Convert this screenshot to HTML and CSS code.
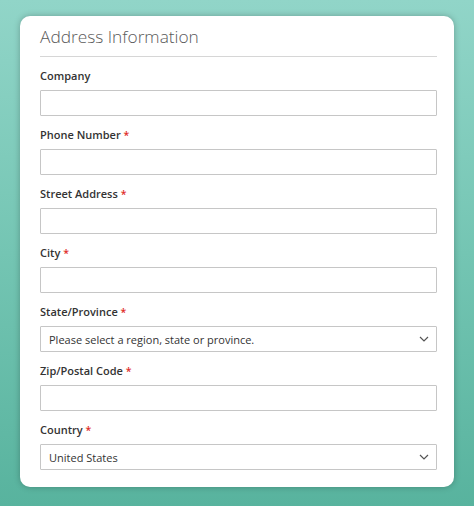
FILE: index.html
```html
<!DOCTYPE html>
<html>
<head>
<meta charset="utf-8">
<link rel="stylesheet" href="styles.css">
</head>
<body>
<div class="card">
  <div class="legend">Address Information</div>
  <div class="fields">
    <div class="field">
      <label class="label">Company</label>
      <input class="control" type="text">
    </div>
    <div class="field">
      <label class="label">Phone Number <span class="req">*</span></label>
      <input class="control" type="text">
    </div>
    <div class="field">
      <label class="label">Street Address <span class="req">*</span></label>
      <input class="control" type="text">
    </div>
    <div class="field">
      <label class="label">City <span class="req">*</span></label>
      <input class="control" type="text">
    </div>
    <div class="field">
      <label class="label">State/Province <span class="req">*</span></label>
      <div class="select-wrap">
        <select class="control select"><option>Please select a region, state or province.</option></select>
        <svg class="chev" width="10" height="6" viewBox="0 0 10 6"><path d="M1 1 L5 5 L9 1" fill="none" stroke="#555" stroke-width="1.2"/></svg>
      </div>
    </div>
    <div class="field">
      <label class="label">Zip/Postal Code <span class="req">*</span></label>
      <input class="control" type="text">
    </div>
    <div class="field">
      <label class="label">Country <span class="req">*</span></label>
      <div class="select-wrap">
        <select class="control select"><option>United States</option></select>
        <svg class="chev" width="10" height="6" viewBox="0 0 10 6"><path d="M1 1 L5 5 L9 1" fill="none" stroke="#555" stroke-width="1.2"/></svg>
      </div>
    </div>
  </div>
</div>
</body>
</html>
```
FILE: styles.css
```css
html, body {
  margin: 0;
  padding: 0;
}
body {
  width: 474px;
  height: 506px;
  overflow: hidden;
  background: linear-gradient(180deg, #91d5c8 0%, #74c5b3 50%, #58b39e 100%);
  font-family: "Open Sans", "Liberation Sans", sans-serif;
  display: flex;
  align-items: flex-start;
}
.card {
  margin: 16px 0 0 20px;
  width: 434px;
  height: 471px;
  box-sizing: border-box;
  background: #fff;
  border-radius: 10px;
  box-shadow: 0 0 6px rgba(0, 0, 0, 0.25);
  padding: 9px 17px 0 20px;
  display: flex;
  flex-direction: column;
}
.legend {
  font-size: 17.3px;
  font-weight: 300;
  color: #5a5a5a;
  line-height: 24px;
  padding-bottom: 7px;
  border-bottom: 1px solid #d6d6d6;
}
.fields {
  display: flex;
  flex-direction: column;
  gap: 11px;
  padding-top: 11px;
}
.field {
  display: flex;
  flex-direction: column;
  gap: 7px;
}
.label {
  font-size: 11px;
  font-weight: 600;
  color: #333;
  line-height: 15px;
  height: 15px;
}
.req {
  color: #e02b27;
  font-size: 10.5px;
  line-height: 0;
}
.control {
  display: block;
  box-sizing: border-box;
  width: 397px;
  height: 26px;
  margin: 0;
  border: 1px solid #c6c6c6;
  border-radius: 1px;
  background: #fff;
  font-family: "Open Sans", "Liberation Sans", sans-serif;
  font-size: 11px;
  color: #333;
  padding: 0 8px;
  outline: none;
}
.select {
  appearance: none;
  -webkit-appearance: none;
}
.select-wrap {
  position: relative;
}
.chev {
  position: absolute;
  right: 8px;
  top: 10px;
}
```
